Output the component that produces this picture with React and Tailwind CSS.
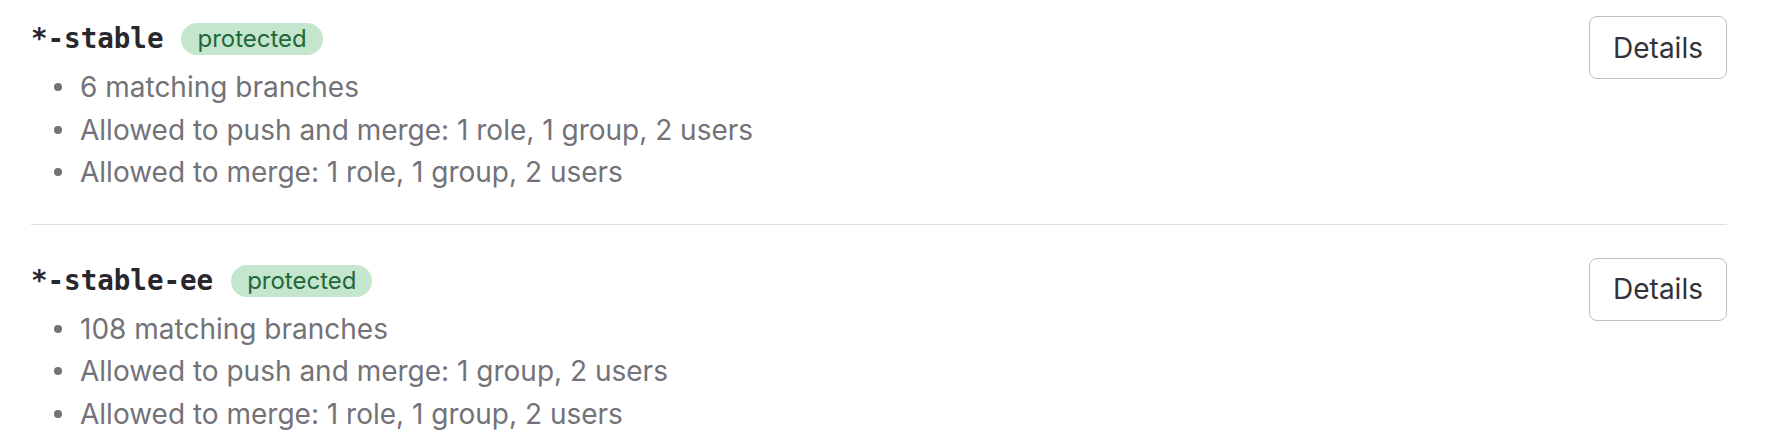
import React from "react"

const rules = [
  {
    name: "*-stable",
    details: [
      "6 matching branches",
      "Allowed to push and merge: 1 role, 1 group, 2 users",
      "Allowed to merge: 1 role, 1 group, 2 users",
    ],
  },
  {
    name: "*-stable-ee",
    details: [
      "108 matching branches",
      "Allowed to push and merge: 1 group, 2 users",
      "Allowed to merge: 1 role, 1 group, 2 users",
    ],
  },
]

const sans = { fontFamily: "Inter, 'Noto Sans', sans-serif" }
const mono = { fontFamily: "'DejaVu Sans Mono', 'Liberation Mono', monospace" }

function RuleRow({ rule, first }) {
  return (
    <li
      className={`flex items-start justify-between pb-[30px] ${
        first ? "pt-[16px]" : "border-t border-[#dcdcde] pt-[33px]"
      }`}
    >
      <div className="min-w-0">
        <div className="flex h-[46px] items-center gap-[18px]">
          <span className="text-[27.5px] font-bold text-[#28272d]" style={mono}>
            {rule.name}
          </span>
          <span className="flex h-[32px] items-center rounded-full bg-[#c3e6cd] px-[16px] text-[24px] text-[#24663b]">
            protected
          </span>
        </div>
        <ul className="mt-[4px] text-[28px] leading-[42.5px] text-[#737278]">
          {rule.details.map((d) => (
            <li key={d} className="flex items-center">
              <span className="ml-[23px] mr-[18px] h-[8px] w-[8px] rounded-full bg-[#737278]" />
              {d}
            </li>
          ))}
        </ul>
      </div>
      <button className="flex h-[63px] w-[138px] items-center justify-center rounded-[8px] border border-[#bfbfc3] bg-white text-[28px] text-[#333238]">
        Details
      </button>
    </li>
  )
}

export default function App() {
  return (
    <div className="h-[448px] w-full overflow-hidden bg-white" style={sans}>
      <ul className="ml-[31px] mr-[38px]">
        {rules.map((r, i) => (
          <RuleRow key={r.name} rule={r} first={i === 0} />
        ))}
      </ul>
    </div>
  )
}
